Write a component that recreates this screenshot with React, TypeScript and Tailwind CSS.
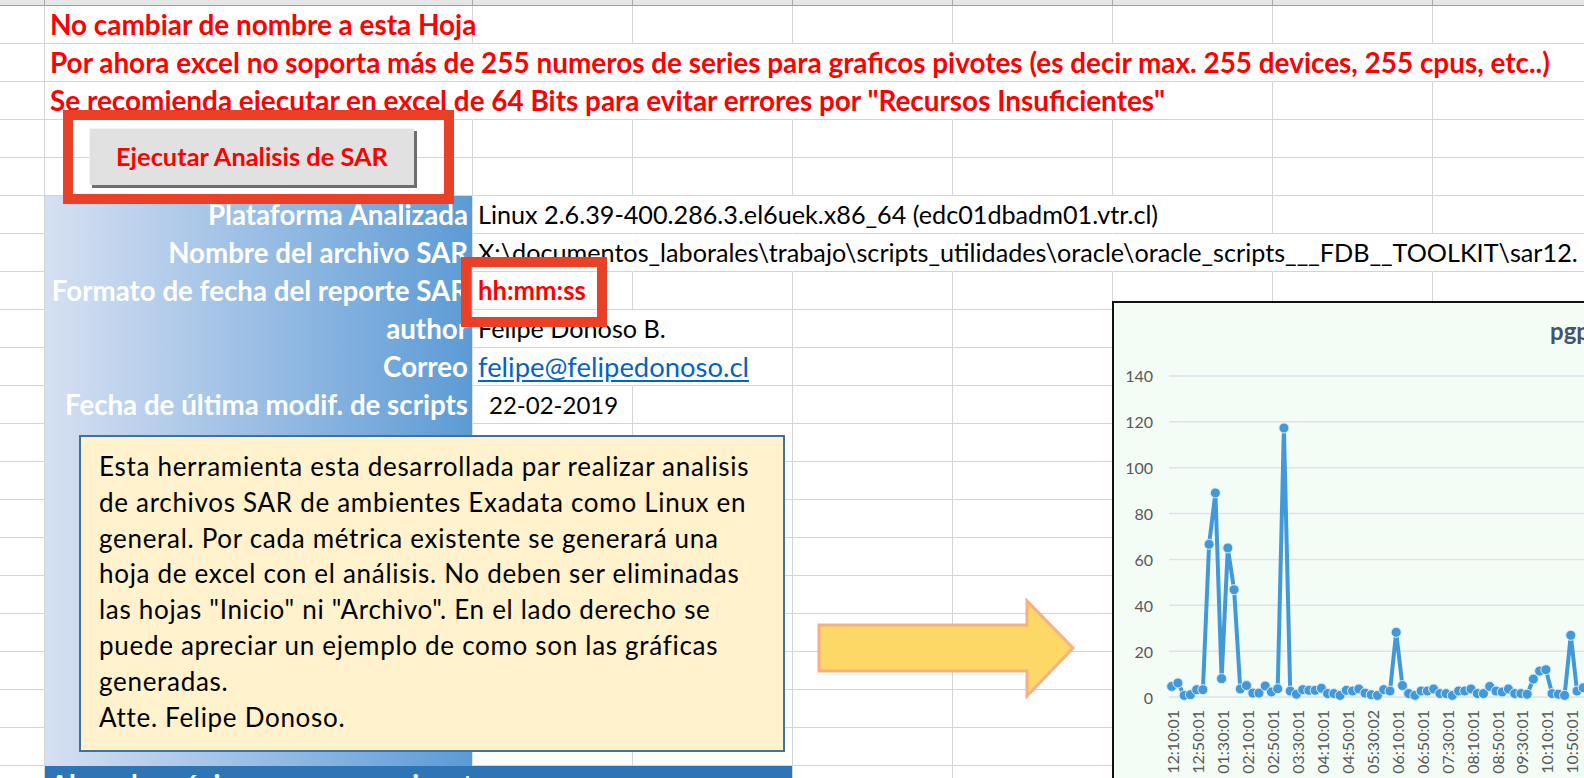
import React from 'react';

const COLS = ['w-[45px]', 'w-[428px]', 'w-[160px]', 'w-[160px]', 'w-[160px]', 'w-[160px]', 'w-[160px]', 'w-[160px]', 'w-[160px]'];

type RowProps = {
  hide?: number[];
  grad?: boolean;
  dark?: boolean;
  b?: React.ReactNode;
  c?: React.ReactNode;
  right?: boolean;
};

function Row({ hide = [], grad, dark, b, c, right }: RowProps) {
  return (
    <div className="flex h-[38px] shrink-0">
      {COLS.map((w, i) => {
        const hidden = hide.includes(i);
        let cls = 'border-r border-b border-r-[#d4d4d4] border-b-[#d4d4d4]';
        if (hidden) cls = 'border-r border-b border-r-transparent border-b-[#d4d4d4]';
        if (i === 1 && grad) cls = 'border-r border-b border-transparent bg-linear-to-r from-[#d6e0f2] to-[#5b9bd5]';
        if (dark && (i === 1 || i === 2)) cls = 'border-r border-b border-transparent bg-[#2e75b6]';
        if (dark && i === 3) cls = 'border-r border-b border-r-[#d4d4d4] border-b-transparent bg-[#2e75b6]';
        let content: React.ReactNode = null;
        let align = 'justify-start';
        if (i === 1) {
          content = b;
          if (right) align = 'justify-end';
        }
        if (i === 2) content = c;
        return (
          <div key={i} className={`${w} h-full shrink-0 box-border flex items-center ${align} ${cls}`}>
            {content}
          </div>
        );
      })}
    </div>
  );
}

function RedTop({ children }: { children: React.ReactNode }) {
  return <span className="whitespace-nowrap pl-[5px] text-[27.9px] font-bold text-[#ff0000] leading-none">{children}</span>;
}

function Label({ children }: { children: React.ReactNode }) {
  return <span className="whitespace-nowrap pr-[4px] text-[27.7px] font-bold text-white leading-none">{children}</span>;
}

function Val({ children, pl = 'pl-[5px]', size = 'text-[25.2px]' }: { children: React.ReactNode; pl?: string; size?: string }) {
  return <span className={`whitespace-nowrap ${pl} ${size} text-black leading-none`}>{children}</span>;
}

const DATA = [
  4.6, 6.1, 0.7, 1, 3.2, 3.2, 66.6, 89, 8, 65, 46.8, 3.5, 5, 1.7, 1.7, 4.8, 2.2, 3.6, 117.3, 2.6, 1.2, 3.2, 2.9, 2.9,
  3.8, 1.5, 1.5, 0.7, 2.9, 2.6, 3.5, 1.7, 1, 0.7, 3.2, 2.6, 28.2, 5, 1.5, 0.7, 2.6, 2.6, 3.5, 1.5, 1.5, 0.7, 2.6, 2.6,
  3.5, 1.5, 1.5, 4.6, 2.6, 2.2, 3.5, 1.5, 1.5, 1.2, 7.8, 11.3, 11.9, 1.5, 1.2, 0.7, 26.9, 2.6, 4, 3, 2,
];

const XLABELS = [
  '12:10:01', '12:50:01', '01:30:01', '02:10:01', '02:50:01', '03:30:01', '04:10:01', '04:50:01', '05:30:02',
  '06:10:01', '06:50:01', '07:30:01', '08:10:01', '08:50:01', '09:30:01', '10:10:01', '10:50:01', '11:30:01',
];

function Chart() {
  const x0 = 57.7;
  const dx = 6.236;
  const y0 = 394;
  const k = 2.293;
  const pts = DATA.map((v, i) => [x0 + dx * i, y0 - v * k]);
  const d = pts.map((p, i) => `${i === 0 ? 'M' : 'L'}${p[0].toFixed(1)},${p[1].toFixed(1)}`).join(' ');
  const ticks = [0, 20, 40, 60, 80, 100, 120, 140];
  return (
    <div className="absolute left-[1112px] top-[301px] w-[600px] h-[520px] border-2 border-[#111111] bg-[#f4fcf6]">
      <svg width="600" height="520" className="block">
        <text x="436" y="37" fontSize="24" fontWeight="700" fill="#44546a" fontFamily="Lato, sans-serif">pgpgin/s</text>
        {ticks.map((t) => (
          <g key={t}>
            <line x1="55" x2="600" y1={y0 - t * k} y2={y0 - t * k} stroke="#dde3ea" strokeWidth="1.5" />
            <text x="39" y={y0 - t * k} textAnchor="end" dominantBaseline="central" fontSize="16" fill="#595959" fontFamily="Lato, sans-serif">{t}</text>
          </g>
        ))}
        {XLABELS.map((l, i) => (
          <text
            key={l}
            transform={`translate(${(x0 + dx * 4 * i + 1).toFixed(1)},407) rotate(-90)`}
            textAnchor="end"
            dominantBaseline="central"
            fontSize="16"
            fill="#595959"
            fontFamily="Lato, sans-serif"
          >
            {l}
          </text>
        ))}
        <path d={d} fill="none" stroke="#4299d9" strokeWidth="4" strokeLinejoin="round" />
        {pts.map((p, i) => (
          <circle key={i} cx={p[0]} cy={p[1]} r="5" fill="#4299d9" stroke="#dcecf8" strokeWidth="1" />
        ))}
      </svg>
    </div>
  );
}

export default function App() {
  return (
    <div className="relative w-[1584px] h-[778px] overflow-hidden bg-white font-['Lato','Noto_Sans',sans-serif]">
      <div className="flex h-[6px] shrink-0">
        {COLS.map((w, i) => (
          <div key={i} className={`${w} h-full shrink-0 box-border border-r border-b border-r-[#ababab] border-b-[#9e9e9e] bg-[#e6e6e6]`} />
        ))}
      </div>
      <div className="flex flex-col">
        <Row b={<RedTop>No cambiar de nombre a esta Hoja</RedTop>} />
        <Row
          hide={[1, 2, 3, 4, 5, 6, 7]}
          b={<RedTop>Por ahora excel no soporta más de 255 numeros de series para graficos pivotes (es decir max. 255 devices, 255 cpus, etc..)</RedTop>}
        />
        <Row
          hide={[1, 2, 3, 4, 5]}
          b={<RedTop>Se recomienda ejecutar en excel de 64 Bits para evitar errores por "Recursos Insuficientes"</RedTop>}
        />
        <Row />
        <Row />
        <Row grad right hide={[2, 3, 4, 5]} b={<Label>Plataforma Analizada</Label>} c={<Val>Linux 2.6.39-400.286.3.el6uek.x86_64 (edc01dbadm01.vtr.cl)</Val>} />
        <Row
          grad
          right
          hide={[2, 3, 4, 5, 6, 7]}
          b={<Label>Nombre del archivo SAR</Label>}
          c={<Val>{'X:\\documentos_laborales\\trabajo\\scripts_utilidades\\oracle\\oracle_scripts___FDB__TOOLKIT\\sar12.'}</Val>}
        />
        <Row
          grad
          right
          b={<Label>Formato de fecha del reporte SAR</Label>}
          c={<span className="whitespace-nowrap pl-[5px] text-[25.7px] font-bold text-[#ff0000] leading-none">hh:mm:ss</span>}
        />
        <Row grad right hide={[2]} b={<Label>author</Label>} c={<Val>Felipe Donoso B.</Val>} />
        <Row
          grad
          right
          hide={[2]}
          b={<Label>Correo</Label>}
          c={<span className="whitespace-nowrap pl-[5px] text-[27.4px] text-[#0563c1] underline underline-offset-[3px] leading-none">felipe@felipedonoso.cl</span>}
        />
        <Row grad right b={<Label>Fecha de última modif. de scripts</Label>} c={<Val pl="pl-[16px]" size="text-[24px]">22-02-2019</Val>} />
        <Row grad />
        <Row grad />
        <Row grad />
        <Row grad />
        <Row grad />
        <Row grad />
        <Row grad />
        <Row grad />
        <Row grad />
        <Row
          dark
          b={<span className="whitespace-nowrap self-start pt-[4px] pl-[5px] text-[27.5px] font-bold text-white leading-none">Ahora la próxima vez que se ejecute se verán las Gráficas del análisis</span>}
        />
      </div>

      {/* Red frame around button */}
      <div className="absolute left-[63px] top-[110px] w-[391px] h-[94px] border-[10px] border-[#ea4027]" />
      {/* Button */}
      <div className="absolute left-[89px] top-[128px] w-[325px] h-[57px] bg-[#e1e1e1] border-t border-l border-[#f4f4f4] shadow-[3px_3px_0_#6e6e6e] flex items-center justify-center">
        <span className="text-[25.4px] font-bold text-[#ff0000] whitespace-nowrap leading-none">Ejecutar Analisis de SAR</span>
      </div>
      {/* Red frame around hh:mm:ss */}
      <div className="absolute left-[461px] top-[257px] w-[146px] h-[70px] border-[10px] border-[#ea4027]" />

      {/* Description box */}
      <div className="absolute left-[79px] top-[435px] w-[706px] h-[317px] border-2 border-[#41719c] bg-[#fff2cc] pt-[12px] pl-[18px]">
        <div className="text-[26px] tracking-[0.7px] leading-[35.8px] text-black whitespace-nowrap">
          <div>Esta herramienta esta desarrollada par realizar analisis</div>
          <div>de archivos SAR de ambientes Exadata como Linux en</div>
          <div>general. Por cada métrica existente se generará una</div>
          <div>hoja de excel con el análisis. No deben ser eliminadas</div>
          <div>las hojas "Inicio" ni "Archivo". En el lado derecho se</div>
          <div>puede apreciar un ejemplo de como son las gráficas</div>
          <div>generadas.</div>
          <div>Atte. Felipe Donoso.</div>
        </div>
      </div>

      {/* Arrow */}
      <svg className="absolute left-[815px] top-[597px]" width="264" height="104">
        <polygon points="4,28 212,28 212,4 258,51 212,99 212,74 4,74" fill="#fed866" stroke="#f4b183" strokeWidth="3" />
      </svg>

      <Chart />
    </div>
  );
}
